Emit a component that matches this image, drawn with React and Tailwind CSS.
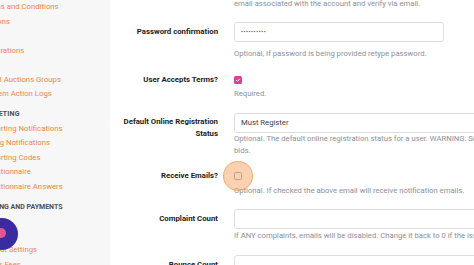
import React from 'react';

const navTop = [
    'Terms and Conditions',
    'Options',
    'Bids',
    'Integrations',
    'Lots',
    'Local Auctions Groups',
    'System Action Logs',
];

const navMarketing = [
    'Reporting Notifications',
    'Billing Notifications',
    'Reporting Codes',
    'Questionnaire',
    'Questionnaire Answers',
];

const navBilling = ['Taxes', 'Invoices', 'Payout Settings', 'Buyer Fees'];

const NavItem = ({ label }) => (
    <div className="h-[14.5px] leading-[14.5px] whitespace-nowrap text-[7.75px] text-[#ef8646]">{label}</div>
);

const NavHeading = ({ label, className = '' }) => (
    <div className={`mt-[5.5px] h-[14.5px] leading-[14.5px] whitespace-nowrap text-[7px] font-bold uppercase text-[#4b4f57] ${className}`}>{label}</div>
);

const Label = ({ children, className = '' }) => (
    <div className={`text-right font-bold text-[7.8px] leading-[11.5px] text-[#1a1d22] ${className}`}>{children}</div>
);

const Help = ({ children, className = '' }) => (
    <p className={`text-[7.7px] leading-[11.5px] text-[#8c9098] whitespace-nowrap ${className}`}>{children}</p>
);

const TextBox = ({ className = '', children }) => (
    <div className={`h-[20px] border border-[#dcdee3] rounded-[3px] bg-white flex items-center px-[6px] text-[7.7px] text-[#3d4148] ${className}`}>
        {children}
    </div>
);

export default function App() {
    return (
        <div className="flex w-[474px] h-[265px] overflow-hidden bg-white font-['Roboto',sans-serif]">
            {/* Sidebar, scrolled partly off the left edge */}
            <aside className="relative w-[110px] shrink-0 h-full bg-[#f7f7f8] overflow-hidden">
                <div className="-ml-[17px]">
                    {navTop.map((l) => <NavItem key={l} label={l} />)}
                    <NavHeading label="Marketing" className="-ml-[5px] tracking-[0.2px]" />
                    {navMarketing.map((l) => <NavItem key={l} label={l} />)}
                    <NavHeading label="Billing and Payments" />
                    {navBilling.map((l) => <NavItem key={l} label={l} />)}
                </div>
                {/* floating help bubble */}
                <div className="absolute left-[-14px] top-[218px] w-[32px] h-[32px] rounded-full bg-[#3b2ba3] flex items-center justify-center">
                    <div className="w-[10px] h-[10px] rounded-full bg-[#e0588f] -ml-[2px] -mt-[2px]" />
                </div>
            </aside>

            {/* Form */}
            <main className="flex-1 min-w-0">
                <div className="grid grid-cols-[108px_1fr] gap-x-4">
                    <div />
                    <Help className="-mt-[2px]">email associated with the account and verify via email.</Help>

                    {/* Password confirmation */}
                    <Label className="mt-[16px]">Password confirmation</Label>
                    <div className="mt-[12px]">
                        <TextBox className="w-[210px]">
                            <span className="text-[6px] tracking-[0.5px] text-[#3d4148]">••••••••••</span>
                        </TextBox>
                        <Help className="mt-[6px]">Optional, If password is being provided retype password.</Help>
                    </div>

                    {/* User Accepts Terms */}
                    <Label className="mt-[15px]">User Accepts Terms?</Label>
                    <div className="mt-[15px]">
                        <div className="h-[12px] flex items-center">
                            <div className="w-[8px] h-[8px] rounded-[1.5px] bg-[#e2408f] flex items-center justify-center">
                                <svg viewBox="0 0 8 8" className="w-[6px] h-[6px]">
                                    <path d="M1.5 4.2 L3.2 5.8 L6.5 2.3" stroke="#fff" strokeWidth="1.3" fill="none" />
                                </svg>
                            </div>
                        </div>
                        <Help className="mt-[1.5px]">Required.</Help>
                    </div>

                    {/* Default Online Registration Status */}
                    <Label className="mt-[17px]">Default Online Registration Status</Label>
                    <div className="mt-[14px]">
                        <TextBox className="w-[320px] h-[19px]">Must Register</TextBox>
                        <Help>Optional. The default online registration status for a user. WARNING: Setting this to Must Register blocks</Help>
                        <Help>bids.</Help>
                    </div>

                    {/* Receive Emails */}
                    <Label className="mt-[14px]">Receive Emails?</Label>
                    <div className="mt-[14px] relative">
                        <div className="h-[12px] flex items-center">
                            <div className="w-[8px] h-[8px] rounded-[1.5px] border border-[#9a9ea6] bg-white" />
                        </div>
                        <Help className="mt-[2.5px]">Optional. If checked the above email will receive notification emails.</Help>
                        {/* click highlight */}
                        <div className="absolute left-[-11px] top-[-9px] w-[30px] h-[30px] rounded-full bg-[#f59a52]/45 border border-[#f29447]/60" />
                    </div>

                    {/* Complaint Count */}
                    <Label className="mt-[17px]">Complaint Count</Label>
                    <div className="mt-[13px]">
                        <TextBox className="w-[320px]" />
                        <Help className="mt-[1px]">If ANY complaints, emails will be disabled. Change it back to 0 if the issue was resolved.</Help>
                    </div>

                    {/* Bounce Count */}
                    <Label className="mt-[17px]">Bounce Count</Label>
                    <div className="mt-[13px]">
                        <TextBox className="w-[320px]" />
                    </div>
                </div>
            </main>
        </div>
    );
}
